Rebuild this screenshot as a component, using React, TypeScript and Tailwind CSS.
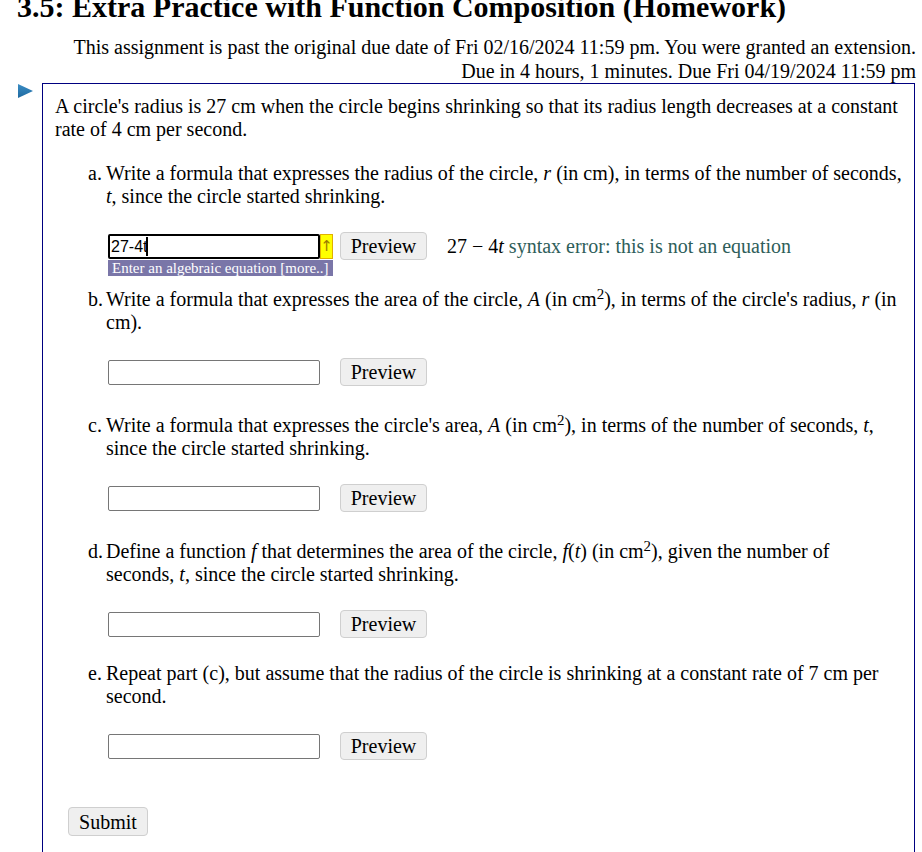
import React from 'react';

function AnswerRow({ value, focused, children }: { value?: string; focused?: boolean; children?: React.ReactNode }) {
  return (
    <div className="mt-[24px] ml-[2px] flex items-center h-[28px]">
      <div className="relative flex items-center">
        <div
          className={
            focused
              ? "w-[212px] h-[25px] border-2 border-black rounded-[2px] bg-white flex items-center px-[1px] font-['Liberation_Sans'] text-[16px] text-black"
              : "w-[212px] h-[25px] border border-[#767676] rounded-[2px] bg-white"
          }
        >
          {value}
          {focused && <span className="inline-block w-[2px] h-[19px] bg-black ml-[-1px]" />}
        </div>
        {focused ? (
          <>
            <div className="w-[13px] h-[25px] bg-[#ffff00] border border-[#e0b000] flex items-center justify-center text-[15px] text-[#9a7a00] font-['DejaVu_Sans'] leading-none">
              ↑
            </div>
            <div className="absolute left-0 top-[26px] w-[225px] h-[16px] bg-[#7a76a8] text-white text-[15px] leading-[16px] pl-[4px] whitespace-nowrap overflow-hidden">
              Enter an algebraic equation [more..]
            </div>
          </>
        ) : (
          <div className="w-[13px]" />
        )}
      </div>
      <button className="ml-[7px] w-[87px] h-[28px] bg-[#efefef] border border-[#cfcfcf] rounded-[4px] text-[20px] text-black leading-none">
        Preview
      </button>
      {children}
    </div>
  );
}

function Part({ label, children, row, gap }: { label: string; children: React.ReactNode; row: React.ReactNode; gap: string }) {
  return (
    <div className={gap}>
      <div className="flex pl-[33px]">
        <span className="w-[18px] shrink-0">{label}</span>
        <div>
          <p>{children}</p>
          {row}
        </div>
      </div>
    </div>
  );
}

export default function App() {
  return (
    <div className="w-[922px] h-[852px] overflow-hidden bg-white font-['Liberation_Serif',serif] text-[20px] leading-[23px] text-black">
      <h1 className="ml-[17px] mt-[-10px] text-[30px] leading-[34px] font-bold whitespace-nowrap">
        3.5: Extra Practice with Function Composition (Homework)
      </h1>
      <div className="mt-[11px] pr-[6px] text-right leading-[24px] whitespace-nowrap">
        <div>This assignment is past the original due date of Fri 02/16/2024 11:59 pm. You were granted an extension.</div>
        <div>Due in 4 hours, 1 minutes. Due Fri 04/19/2024 11:59 pm</div>
      </div>
      <div className="flex items-start">
        <svg className="ml-[18px] shrink-0" width="16" height="16" viewBox="0 0 16 16">
          <defs>
            <linearGradient id="tri" x1="0" y1="0" x2="0" y2="1">
              <stop offset="0" stopColor="#3a8cc4" />
              <stop offset="1" stopColor="#1f6aa0" />
            </linearGradient>
          </defs>
          <polygon points="0,1 15,8 0,15" fill="url(#tri)" />
        </svg>
        <div className="ml-[8px] w-[873px] h-[900px] border border-[#000080] pt-[11px] pl-[12px] pr-[4px]">
          <p>
            A circle's radius is 27 cm when the circle begins shrinking so that its radius length decreases at a constant rate of 4 cm per second.
          </p>
          <Part
            label="a."
            gap="mt-[21px]"
            row={
              <AnswerRow value="27-4t" focused>
                <span className="ml-[20px] whitespace-nowrap">
                  27 − 4<i>t</i> <span className="text-[#2e5e5a]">syntax error: this is not an equation</span>
                </span>
              </AnswerRow>
            }
          >
            Write a formula that expresses the radius of the circle, <i>r</i> (in cm), in terms of the number of seconds, <i>t</i>, since the circle started shrinking.
          </Part>
          <Part label="b." gap="mt-[28px]" row={<AnswerRow />}>
            Write a formula that expresses the area of the circle, <i>A</i> (in cm<sup className="text-[15px]">2</sup>), in terms of the circle's radius, <i>r</i> (in cm).
          </Part>
          <Part label="c." gap="mt-[28px]" row={<AnswerRow />}>
            Write a formula that expresses the circle's area, <i>A</i> (in cm<sup className="text-[15px]">2</sup>), in terms of the number of seconds, <i>t</i>, since the circle started shrinking.
          </Part>
          <Part label="d." gap="mt-[28px]" row={<AnswerRow />}>
            Define a function <i>f</i> that determines the area of the circle, <i>f</i>(<i>t</i>) (in cm<sup className="text-[15px]">2</sup>), given the number of
            <br />
            seconds, <i>t</i>, since the circle started shrinking.
          </Part>
          <Part label="e." gap="mt-[24px]" row={<AnswerRow />}>
            Repeat part (c), but assume that the radius of the circle is shrinking at a constant rate of 7 cm per second.
          </Part>
          <button className="mt-[47px] ml-[13px] w-[80px] h-[29px] bg-[#efefef] border border-[#cfcfcf] rounded-[4px] text-[20px] leading-none">
            Submit
          </button>
        </div>
      </div>
    </div>
  );
}
